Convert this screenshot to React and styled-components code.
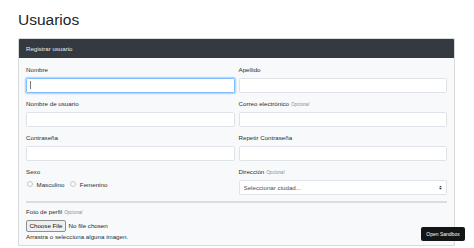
import React from 'react';
import styled, { createGlobalStyle, css } from 'styled-components';

const GlobalStyle = createGlobalStyle`
  html, body {
    margin: 0;
    padding: 0;
    background: #fff;
    font-family: "Liberation Sans", Arial, sans-serif;
    color: #212529;
  }
`;

const Page = styled.div`
  padding: 11px 19px 0 18px;
`;

const Title = styled.h1`
  margin: 0 0 8.4px;
  font-size: 15.5px;
  line-height: 18.6px;
  font-weight: 400;
  color: #212529;
`;

const Card = styled.div`
  border: 1px solid rgba(0, 0, 0, 0.125);
  border-radius: 1.6px;
  overflow: hidden;
  background: #f8f9fa;
`;

const CardHeader = styled.div`
  height: 19px;
  line-height: 19px;
  padding: 0 7px;
  background: #343a40;
  color: #e9ecef;
  font-size: 6.1px;
`;

const CardBody = styled.form`
  padding: 7px 7px 4px;
`;

const Grid = styled.div`
  display: grid;
  grid-template-columns: 1fr 1fr;
  column-gap: 4px;
`;

const Group = styled.div`
  margin-bottom: ${p => (p.$last ? '0' : '6.2px')};
`;

const Label = styled.label`
  display: block;
  height: 9.6px;
  font-size: 6.2px;
  line-height: 9.6px;
  margin-bottom: 3.2px;
  color: #2b2f33;
`;

const Optional = styled.small`
  font-size: 4.6px;
  line-height: 0;
  font-style: italic;
  color: #868e96;
  margin-left: 2px;
`;

const InputWrap = styled.div`
  position: relative;
`;

const Input = styled.input`
  display: block;
  box-sizing: border-box;
  width: 100%;
  height: 15px;
  padding: 0 4px;
  border: 1px solid #dfe3e7;
  border-radius: 1.6px;
  background: #fff;
  font-family: inherit;
  font-size: 6.2px;
  color: #495057;
  outline: none;
  ${p => p.$focus && css`
    border-color: #80bdff;
    box-shadow: 0 0 0 1.3px rgba(0, 123, 255, 0.25);
  `}
`;

const Caret = styled.span`
  position: absolute;
  left: 4px;
  top: 3.5px;
  width: 0.7px;
  height: 8px;
  background: #777;
`;

const Select = styled.select`
  display: block;
  box-sizing: border-box;
  width: 100%;
  height: 15px;
  padding: 0 4px;
  border: 1px solid #dfe3e7;
  border-radius: 1.6px;
  background: #fff;
  font-family: inherit;
  font-size: 6.2px;
  color: #495057;
  appearance: none;
  -webkit-appearance: none;
  outline: none;
`;

const SelectArrows = styled.svg`
  position: absolute;
  right: 5px;
  top: 5px;
  width: 3px;
  height: 5px;
  pointer-events: none;
`;

const RadioRow = styled.div`
  display: flex;
  align-items: center;
  height: 9px;
  margin-top: 0.6px;
`;

const RadioOption = styled.label`
  display: flex;
  align-items: center;
  font-size: 6.2px;
  margin-right: 5px;
  color: #2b2f33;
`;

const RadioDot = styled.span`
  box-sizing: border-box;
  width: 6px;
  height: 6px;
  border-radius: 50%;
  border: 0.7px solid #c4c8cc;
  background: #fff;
  margin: 0 3.5px 0 1px;
`;

const Divider = styled.div`
  height: 0;
  border-top: 2px solid #dadde0;
  margin: 0 0 4px;
`;

const FileRow = styled.div`
  display: flex;
  align-items: center;
  height: 12px;
  font-size: 6.2px;
`;

const FileButton = styled.span`
  box-sizing: border-box;
  height: 12px;
  line-height: 10px;
  padding: 0 2.5px;
  border: 1px solid #8f8f8f;
  border-radius: 2px;
  background: #efefef;
  color: #111;
  margin-right: 2.5px;
`;

const Help = styled.div`
  font-size: 6.2px;
  line-height: 9.6px;
  color: #2b2f33;
`;

const SandboxButton = styled.button`
  position: fixed;
  right: 9px;
  bottom: 7px;
  width: 44px;
  height: 14px;
  padding: 0;
  border: none;
  border-radius: 2px;
  background: #151515;
  color: #fff;
  font-family: inherit;
  font-size: 5px;
`;

export default function App() {
  return (
    <Page>
      <GlobalStyle />
      <Title>Usuarios</Title>
      <Card>
        <CardHeader>Registrar usuario</CardHeader>
        <CardBody onSubmit={e => e.preventDefault()}>
          <Grid>
            <Group>
              <Label>Nombre</Label>
              <InputWrap>
                <Input $focus />
                <Caret />
              </InputWrap>
            </Group>
            <Group>
              <Label>Apellido</Label>
              <Input />
            </Group>
            <Group>
              <Label>Nombre de usuario</Label>
              <Input />
            </Group>
            <Group>
              <Label>
                Correo electrónico<Optional>Opcional</Optional>
              </Label>
              <Input />
            </Group>
            <Group>
              <Label>Contraseña</Label>
              <Input type="password" />
            </Group>
            <Group>
              <Label>Repetir Contraseña</Label>
              <Input type="password" />
            </Group>
            <Group>
              <Label>Sexo</Label>
              <RadioRow>
                <RadioOption>
                  <RadioDot />
                  Masculino
                </RadioOption>
                <RadioOption>
                  <RadioDot />
                  Femenino
                </RadioOption>
              </RadioRow>
            </Group>
            <Group>
              <Label>
                Dirección<Optional>Opcional</Optional>
              </Label>
              <InputWrap>
                <Select defaultValue="">
                  <option value="">Seleccionar ciudad...</option>
                </Select>
                <SelectArrows viewBox="0 0 4 5">
                  <path d="M2 0L0 2h4zM2 5L0 3h4z" fill="#343a40" />
                </SelectArrows>
              </InputWrap>
            </Group>
          </Grid>
          <Divider />
          <Group $last>
            <Label>
              Foto de perfil<Optional>Opcional</Optional>
            </Label>
            <FileRow>
              <FileButton>Choose File</FileButton>
              No file chosen
            </FileRow>
            <Help>Arrastra o selecciona alguna imagen.</Help>
          </Group>
        </CardBody>
      </Card>
      <SandboxButton>Open Sandbox</SandboxButton>
    </Page>
  );
}
